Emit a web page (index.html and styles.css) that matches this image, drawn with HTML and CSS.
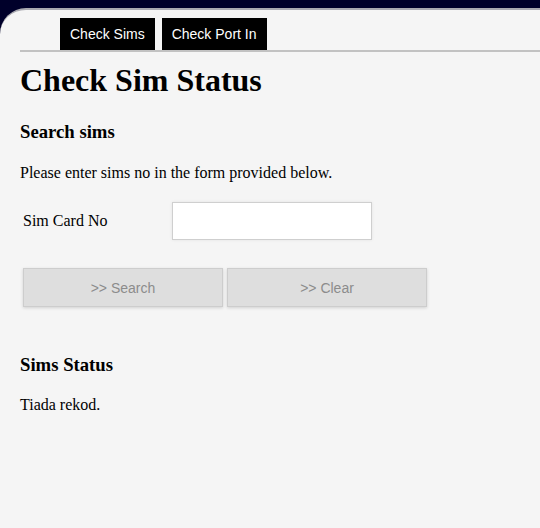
FILE: index.html
```html
<!DOCTYPE html>
<html lang="en">
<head>
<meta charset="utf-8">
<title>Check Sim Status</title>
<link rel="stylesheet" href="styles.css">
</head>
<body>
<div class="page">
  <nav class="tabs">
    <a class="tab" href="#">Check Sims</a>
    <a class="tab" href="#">Check Port In</a>
  </nav>
  <main class="content">
    <h1 class="title">Check Sim Status</h1>
    <h3 class="section">Search sims</h3>
    <p class="text intro">Please enter sims no in the form provided below.</p>
    <form class="form">
      <div class="row">
        <label class="label" for="sim">Sim Card No</label>
        <input class="input" id="sim" type="text">
      </div>
      <div class="actions">
        <button class="btn" type="button">&gt;&gt; Search</button>
        <button class="btn" type="button">&gt;&gt; Clear</button>
      </div>
    </form>
    <h3 class="section status">Sims Status</h3>
    <p class="text">Tiada rekod.</p>
  </main>
</div>
</body>
</html>
```

FILE: styles.css
```css
html, body {
  margin: 0;
  padding: 0;
  height: 100%;
}
body {
  background: #00002a;
  font-family: "Liberation Serif", "Times New Roman", serif;
  color: #000;
  overflow: hidden;
}
.page {
  margin-top: 8px;
  background: #f5f5f5;
  border-top: 2px solid #a9a9b0;
  border-top-left-radius: 26px;
  min-height: 540px;
  box-sizing: border-box;
}
.tabs {
  display: flex;
  gap: 7px;
  margin: 0 0 0 20px;
  padding: 8px 0 0 40px;
  border-bottom: 2px solid #c2c2c2;
}
.tab {
  display: block;
  height: 32px;
  line-height: 32px;
  padding: 0 10px;
  background: #000;
  color: #fff;
  font-family: "Liberation Sans", Arial, sans-serif;
  font-size: 14px;
  text-decoration: none;
}
.content {
  padding: 0 0 0 20px;
}
.title {
  font-size: 32px;
  font-weight: bold;
  margin: 10px 0 22px;
}
.section {
  font-size: 18.72px;
  font-weight: bold;
  margin: 0 0 21px;
}
.text {
  font-size: 16px;
  margin: 0 0 20px;
}
.form {
  margin: 0;
}
.row {
  display: flex;
  align-items: center;
  padding-left: 3px;
}
.label {
  width: 149px;
  font-size: 16px;
}
.input {
  width: 200px;
  height: 38px;
  box-sizing: border-box;
  border: 1px solid #cfcfcf;
  background: #fff;
  box-shadow: 0 0 3px rgba(0, 0, 0, 0.08);
  margin: 0;
  padding: 0 6px;
}
.actions {
  display: flex;
  gap: 4px;
  padding-left: 3px;
  margin-top: 28px;
}
.btn {
  width: 200px;
  height: 39px;
  box-sizing: border-box;
  background: #dedede;
  border: 1px solid #cdcdcd;
  box-shadow: 0 1px 3px rgba(0, 0, 0, 0.15);
  color: #8c8c8c;
  font-family: "Liberation Sans", Arial, sans-serif;
  font-size: 14px;
  margin: 0;
  padding: 0;
}
.status {
  margin-top: 47px;
  margin-bottom: 20px;
}
```
